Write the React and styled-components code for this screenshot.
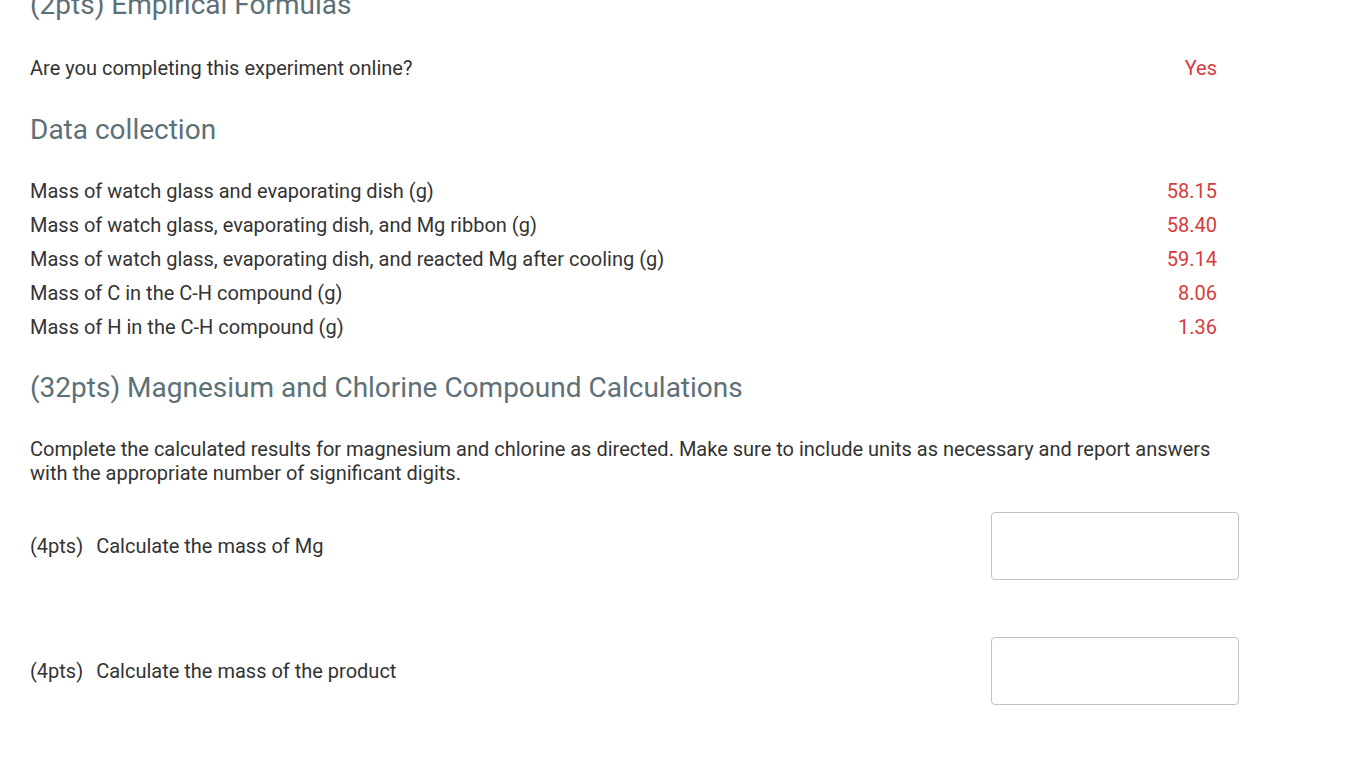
import React from "react";
import styled, { createGlobalStyle } from "styled-components";

const GlobalStyle = createGlobalStyle`
  html, body {
    margin: 0;
    padding: 0;
    background: #ffffff;
    font-family: Roboto, "Liberation Sans", Arial, sans-serif;
    overflow: hidden;
  }
`;

const dataRows = [
  { label: "Mass of watch glass and evaporating dish (g)", value: "58.15" },
  { label: "Mass of watch glass, evaporating dish, and Mg ribbon (g)", value: "58.40" },
  { label: "Mass of watch glass, evaporating dish, and reacted Mg after cooling (g)", value: "59.14" },
  { label: "Mass of C in the C-H compound (g)", value: "8.06" },
  { label: "Mass of H in the C-H compound (g)", value: "1.36" },
];

const questions = [
  { pts: "(4pts)", text: "Calculate the mass of Mg" },
  { pts: "(4pts)", text: "Calculate the mass of the product" },
];

const App = () => {
  return (
    <>
      <GlobalStyle />
      <StyledPage>
        <StyledHeading>(2pts) Empirical Formulas</StyledHeading>
        <StyledRow>
          <StyledLabel>Are you completing this experiment online?</StyledLabel>
          <StyledValue>Yes</StyledValue>
        </StyledRow>

        <StyledHeading $top={30}>Data collection</StyledHeading>
        <StyledList>
          {dataRows.map((row, i) => (
            <StyledDataRow key={`row-${i}`}>
              <StyledLabel>{row.label}</StyledLabel>
              <StyledValue>{row.value}</StyledValue>
            </StyledDataRow>
          ))}
        </StyledList>

        <StyledHeading $top={24}>(32pts) Magnesium and Chlorine Compound Calculations</StyledHeading>
        <StyledIntro>
          Complete the calculated results for magnesium and chlorine as directed. Make sure to include units as
          necessary and report answers with the appropriate number of significant digits.
        </StyledIntro>

        {questions.map((q, i) => (
          <StyledQuestion key={`q-${i}`}>
            <StyledLabel>
              <StyledPts>{q.pts}</StyledPts>
              {q.text}
            </StyledLabel>
            <StyledInput type="text" />
          </StyledQuestion>
        ))}
      </StyledPage>
    </>
  );
};

export default App;

const StyledPage = styled.div`
  width: 1209px;
  padding: 0 0 0 30px;
  margin-top: -15px;
  box-sizing: content-box;
`;

const StyledHeading = styled.h2`
  margin: ${(p) => p.$top || 0}px 0 0 0;
  font-size: 28px;
  line-height: 40px;
  font-weight: 400;
  color: #5d7077;
`;

const StyledRow = styled.div`
  display: flex;
  justify-content: space-between;
  align-items: center;
  padding-right: 22px;
  margin-top: 31px;
`;

const StyledList = styled.div`
  display: flex;
  flex-direction: column;
  margin-top: 24px;
  padding-right: 22px;
`;

const StyledDataRow = styled.div`
  display: flex;
  justify-content: space-between;
  align-items: center;
  height: 34px;
`;

const StyledLabel = styled.span`
  font-size: 20px;
  color: #333333;
  line-height: 24px;
`;

const StyledValue = styled.span`
  font-size: 20px;
  line-height: 24px;
  color: #d63b3b;
`;

const StyledIntro = styled.p`
  margin: 29px 0 0 0;
  width: 1186px;
  font-size: 20px;
  line-height: 24px;
  color: #333333;
`;

const StyledQuestion = styled.div`
  display: flex;
  justify-content: space-between;
  align-items: center;
  margin-top: 27px;
  & + & {
    margin-top: 57px;
  }
`;

const StyledPts = styled.span`
  margin-right: 13px;
`;

const StyledInput = styled.input`
  width: 248px;
  height: 68px;
  box-sizing: border-box;
  border: 1px solid #c2c2c2;
  border-radius: 4px;
  background: #fff;
  outline: none;
`;
